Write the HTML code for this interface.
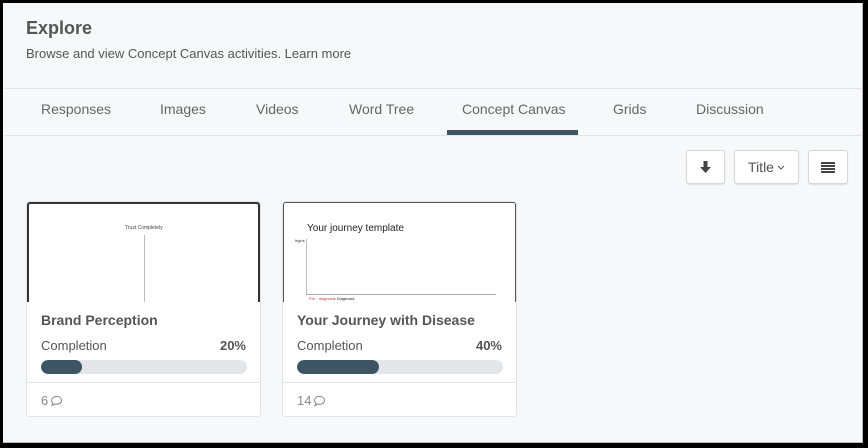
<!DOCTYPE html>
<html><head><style>
*{box-sizing:border-box;margin:0;padding:0}
body{width:868px;height:448px;overflow:hidden;background:#000;font-family:"Liberation Sans",sans-serif;color:#555}
.frame{position:absolute;left:3px;top:3px;width:860px;height:440px;background:#f7f8fa;border-right:1px solid #bbb;border-bottom:1px solid #bbb;overflow:hidden}
h1{position:absolute;left:23px;top:15px;font-size:18px;font-weight:bold;color:#555}
.sub{position:absolute;left:23px;top:43px;font-size:13px;color:#555}
.line{position:absolute;left:0;right:0;height:1px;background:#e3e4e6}
.tab{position:absolute;top:98px;font-size:14px;color:#666}
.ul{position:absolute;left:444px;top:127px;width:131px;height:5px;background:#3e5566}
.btn{position:absolute;top:147px;height:34px;border:1px solid #d6d6d6;border-radius:3px;background:#fff;box-shadow:0 1px 1px rgba(0,0,0,.1);display:flex;align-items:center;justify-content:center;font-size:14px;color:#555}
.card{position:absolute;top:198px;width:235px;height:216px;background:#fff;border:1px solid #e2e3e5;border-radius:3px}
.img{position:absolute;left:0;top:0;width:233px;height:100px;border:2px solid #333;border-bottom:none;border-radius:3px 3px 0 0;background:#fff;overflow:hidden}
.title{position:absolute;left:14px;top:110px;font-size:14px;font-weight:bold;color:#555}
.comp{position:absolute;left:14px;top:136px;font-size:13px;color:#555}
.pct{position:absolute;right:14px;top:136px;font-size:13px;font-weight:bold;color:#555}
.bar{position:absolute;left:14px;top:158px;width:206px;height:14px;border-radius:7px;background:#e4e6e9;overflow:hidden}
.fill{height:100%;background:#3e5566;border-radius:7px}
.div{position:absolute;left:0;right:0;top:180px;height:1px;background:#e3e4e6}
.cm{position:absolute;left:14px;top:191px;font-size:13px;color:#888;display:flex;align-items:center}
</style></head><body>
<div class="frame">
<h1>Explore</h1>
<div class="sub">Browse and view Concept Canvas activities. Learn more</div>
<div class="line" style="top:85px"></div>
<div class="tab" style="left:38px">Responses</div>
<div class="tab" style="left:157px">Images</div>
<div class="tab" style="left:253px">Videos</div>
<div class="tab" style="left:346px">Word Tree</div>
<div class="tab" style="left:459px">Concept Canvas</div>
<div class="tab" style="left:610px">Grids</div>
<div class="tab" style="left:693px">Discussion</div>
<div class="line" style="top:132px"></div>
<div class="ul"></div>
<div class="btn" style="left:683px;width:39px"><svg width="13" height="14" viewBox="0 0 13 14"><path d="M4.5 1h4v6h3.5L6.5 13 1 7h3.5z" fill="#444"/></svg></div>
<div class="btn" style="left:731px;width:65px">Title <svg width="8" height="5" style="margin-left:3px"><path d="M1 1l3 3 3-3" stroke="#555" fill="none"/></svg></div>
<div class="btn" style="left:805px;width:40px"><svg width="14" height="11"><rect y="0" width="14" height="2" fill="#444"/><rect y="3" width="14" height="2" fill="#444"/><rect y="6" width="14" height="2" fill="#444"/><rect y="9" width="14" height="2" fill="#444"/></svg></div>

<div class="card" style="left:23px">
<div class="img"><div style="position:absolute;left:96px;top:21px;font-size:5px;color:#444">Trust Completely</div><div style="position:absolute;left:115px;top:31px;width:1px;height:70px;background:#bbb"></div></div>
<div class="title">Brand Perception</div>
<div class="comp">Completion</div><div class="pct">20%</div>
<div class="bar"><div class="fill" style="width:41px"></div></div>
<div class="div"></div>
<div class="cm">6<svg width="13" height="12" viewBox="0 0 13 12" style="margin-left:2px"><path d="M6.5 1.5C3.5 1.5 1.5 3.2 1.5 5.2c0 1.1.6 2 1.5 2.7L2 10.5l3-1.5c.5.1 1 .2 1.5.2 3 0 5-1.7 5-4S9.5 1.5 6.5 1.5z" stroke="#888" fill="none"/></svg></div>
</div>

<div class="card" style="left:279px">
<div class="img" style="border:1px solid #555;border-bottom:none"><div style="position:absolute;left:23px;top:20px;font-size:10px;color:#222">Your journey template</div><div style="position:absolute;left:11px;top:35px;font-size:4px;color:#333">highs</div><div style="position:absolute;left:22px;top:36px;width:1px;height:56px;background:#bbb"></div><div style="position:absolute;left:22px;top:91px;width:190px;height:1px;background:#aaa"></div><div style="position:absolute;left:25px;top:93px;font-size:4px;color:#c33">Pre - diagnosis <span style="color:#222">Diagnosis</span></div></div>
<div class="title">Your Journey with Disease</div>
<div class="comp">Completion</div><div class="pct">40%</div>
<div class="bar"><div class="fill" style="width:82px"></div></div>
<div class="div"></div>
<div class="cm">14<svg width="13" height="12" viewBox="0 0 13 12" style="margin-left:2px"><path d="M6.5 1.5C3.5 1.5 1.5 3.2 1.5 5.2c0 1.1.6 2 1.5 2.7L2 10.5l3-1.5c.5.1 1 .2 1.5.2 3 0 5-1.7 5-4S9.5 1.5 6.5 1.5z" stroke="#888" fill="none"/></svg></div>
</div>
</div>
</body></html>
